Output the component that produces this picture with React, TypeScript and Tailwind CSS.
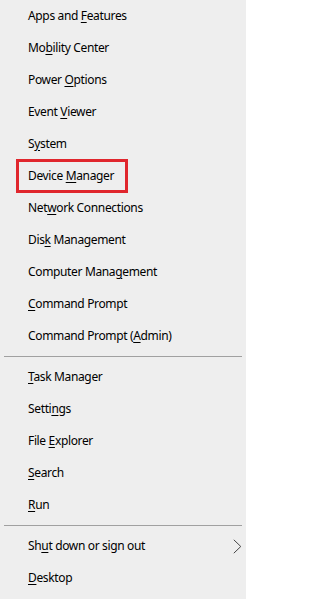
import React from "react";

type Item = { pre: string; key: string; post: string; arrow?: boolean; boxed?: boolean };

const group1: Item[] = [
  { pre: "Apps and ", key: "F", post: "eatures" },
  { pre: "Mo", key: "b", post: "ility Center" },
  { pre: "Power ", key: "O", post: "ptions" },
  { pre: "Event ", key: "V", post: "iewer" },
  { pre: "S", key: "y", post: "stem" },
  { pre: "Device ", key: "M", post: "anager", boxed: true },
  { pre: "Net", key: "w", post: "ork Connections" },
  { pre: "Dis", key: "k", post: " Management" },
  { pre: "Computer Mana", key: "g", post: "ement" },
  { pre: "", key: "C", post: "ommand Prompt" },
  { pre: "Command Prompt (", key: "A", post: "dmin)" },
];
const group2: Item[] = [
  { pre: "", key: "T", post: "ask Manager" },
  { pre: "Setti", key: "n", post: "gs" },
  { pre: "File ", key: "E", post: "xplorer" },
  { pre: "", key: "S", post: "earch" },
  { pre: "", key: "R", post: "un" },
];
const group3: Item[] = [
  { pre: "Sh", key: "u", post: "t down or sign out", arrow: true },
  { pre: "", key: "D", post: "esktop" },
];

function Row({ item }: { item: Item }) {
  return (
    <div className="relative flex h-8 items-center pl-[28px] pr-[4px]">
      {item.boxed && (
        <div className="absolute left-[16px] top-[-1px] h-[34px] w-[112px] border-[3px] border-[#e0262d]" />
      )}
      <span className="flex-1 whitespace-pre">
        {item.pre}
        <span className="underline underline-offset-2 decoration-1">{item.key}</span>
        {item.post}
      </span>
      {item.arrow && (
        <svg width="9" height="15" viewBox="0 0 9 15">
          <path d="M0.8 0.8 L7.8 7.5 L0.8 14.2" fill="none" stroke="#444" strokeWidth="1" />
        </svg>
      )}
    </div>
  );
}

function Sep() {
  return <div className="mx-[4px] my-[4px] h-px bg-[#a0a0a0]" />;
}

export default function App() {
  return (
    <div
      className="h-[599px] w-[246px] bg-[#eeeeee] text-[12px] tracking-[-0.35px] text-black"
      style={{ fontFamily: '"Noto Sans", "Open Sans", sans-serif' }}
    >
      {group1.map((it, i) => (
        <Row key={i} item={it} />
      ))}
      <Sep />
      {group2.map((it, i) => (
        <Row key={i} item={it} />
      ))}
      <Sep />
      {group3.map((it, i) => (
        <Row key={i} item={it} />
      ))}
    </div>
  );
}
